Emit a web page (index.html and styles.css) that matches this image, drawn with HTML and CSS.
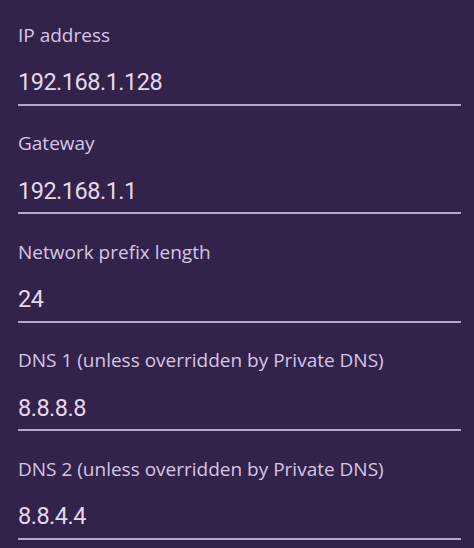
FILE: index.html
```html
<!DOCTYPE html>
<html>
<head>
<meta charset="utf-8">
<link rel="stylesheet" href="styles.css">
</head>
<body>
<div class="list">
  <div class="field">
    <div class="label">IP address</div>
    <div class="value">192.168.1.128</div>
  </div>
  <div class="field">
    <div class="label">Gateway</div>
    <div class="value">192.168.1.1</div>
  </div>
  <div class="field">
    <div class="label">Network prefix length</div>
    <div class="value">24</div>
  </div>
  <div class="field">
    <div class="label">DNS 1 (unless overridden by Private DNS)</div>
    <div class="value">8.8.8.8</div>
  </div>
  <div class="field">
    <div class="label">DNS 2 (unless overridden by Private DNS)</div>
    <div class="value">8.8.4.4</div>
  </div>
</div>
</body>
</html>
```
FILE: styles.css
```css
html, body {
  margin: 0;
  padding: 0;
  background: #33224a;
  height: 100%;
  overflow: hidden;
}
.list {
  padding: 0 13px 0 18px;
  margin-top: -3px;
  font-family: Roboto, "Noto Sans", sans-serif;
}
.field {
  padding-top: 25.5px;
  padding-bottom: 5.5px;
  border-bottom: 2px solid #b9a6cf;
}
.label {
  font-family: "Open Sans", Roboto, sans-serif;
  font-size: 19px;
  line-height: 24px;
  color: #d6c6e6;
}
.value {
  margin-top: 19.5px;
  font-size: 23.5px;
  line-height: 32px;
  font-weight: 400;
  letter-spacing: -0.5px;
  color: #e4d8ee;
}
```
